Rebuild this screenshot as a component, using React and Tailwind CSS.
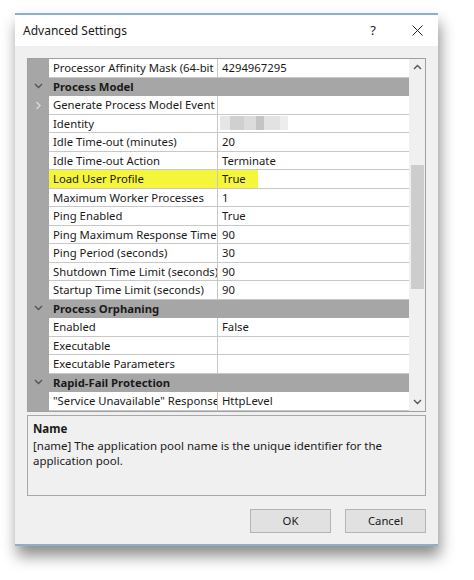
import React from "react";

const rows = [
  { name: "Processor Affinity Mask (64-bit option)", value: "4294967295" },
  { cat: "Process Model" },
  { name: "Generate Process Model Event Log Entry", value: "", arrow: true },
  { name: "Identity", value: "", blur: true },
  { name: "Idle Time-out (minutes)", value: "20" },
  { name: "Idle Time-out Action", value: "Terminate" },
  { name: "Load User Profile", value: "True", mark: true },
  { name: "Maximum Worker Processes", value: "1" },
  { name: "Ping Enabled", value: "True" },
  { name: "Ping Maximum Response Time (seconds)", value: "90" },
  { name: "Ping Period (seconds)", value: "30" },
  { name: "Shutdown Time Limit (seconds)", value: "90" },
  { name: "Startup Time Limit (seconds)", value: "90" },
  { cat: "Process Orphaning" },
  { name: "Enabled", value: "False" },
  { name: "Executable", value: "" },
  { name: "Executable Parameters", value: "" },
  { cat: "Rapid-Fail Protection" },
  { name: "\"Service Unavailable\" Response Type", value: "HttpLevel" },
];

function Chevron({ dir, className }) {
  const d = dir === "down" ? "M1 2 L4.5 5.5 L8 2" : dir === "up" ? "M1 6 L4.5 2.5 L8 6" : "M2.5 1 L6 4.5 L2.5 8";
  return (
    <svg width="9" height="9" viewBox="0 0 9 9" className={className}>
      <path d={d} fill="none" stroke="currentColor" strokeWidth="1.4" />
    </svg>
  );
}

function Row({ r }) {
  if (r.cat) {
    return (
      <div className="flex h-[18.5px] items-center bg-[#a6a6a6]">
        <div className="flex w-[21px] shrink-0 justify-center text-[#555]">
          <Chevron dir="down" />
        </div>
        <div className="pl-[4px] font-bold text-[#1a1a1a]">{r.cat}</div>
      </div>
    );
  }
  return (
    <div className="flex h-[18.5px]">
      <div className="flex w-[21px] shrink-0 items-center justify-center bg-[#a6a6a6] text-[#d8d8d8]">
        {r.arrow && <Chevron dir="right" />}
      </div>
      <div
        className={
          "flex w-[169px] shrink-0 items-center overflow-hidden whitespace-nowrap border-b border-r border-[#c8c8c8] pl-[4px] " +
          (r.mark ? "bg-[#f5f53c]" : "bg-white")
        }
      >
        {r.name}
      </div>
      <div className="flex flex-1 items-center border-b border-[#c8c8c8] bg-white">
        {r.blur ? (
          <div className="flex h-full items-center pl-[2px]">
            <div className="h-[14px] w-[10px] bg-[#e6e6e6]" />
            <div className="h-[14px] w-[14px] bg-[#d0d0d0]" />
            <div className="h-[14px] w-[12px] bg-[#dcdcdc]" />
            <div className="h-[14px] w-[8px] bg-[#c4c4c4]" />
            <div className="h-[14px] w-[16px] bg-[#e2e2e2]" />
            <div className="h-[14px] w-[8px] bg-[#ededed]" />
          </div>
        ) : r.mark ? (
          <span className="flex h-full items-center bg-[#f5f53c] pl-[4px] pr-[12px]">{r.value}</span>
        ) : (
          <span className="pl-[4px]">{r.value}</span>
        )}
      </div>
    </div>
  );
}

export default function App() {
  return (
    <div className="h-[580px] w-[474px] bg-white pl-[15px] pt-[13px] text-[11.3px] leading-none text-[#1a1a1a]" style={{ fontFamily: '"Noto Sans", "Open Sans", sans-serif' }}>
      <div className="w-[423px] border-t-2 border-b-2 border-[#8fb0c4] bg-[#f0f0f0] shadow-[2px_10px_14px_rgba(0,0,0,0.45)]">
        <div className="flex h-[31px] items-center bg-white pl-[8px] pr-[15px]">
          <span className="flex-1 text-[12px]">Advanced Settings</span>
          <span className="mr-[36px] text-[13px]">?</span>
          <svg width="11" height="11" viewBox="0 0 11 11">
            <path d="M0.5 0.5 L10.5 10.5 M10.5 0.5 L0.5 10.5" stroke="#222" strokeWidth="1" />
          </svg>
        </div>
        <div className="px-[12px] pt-[12px]">
          <div className="flex border border-[#a0a0a0] bg-white">
            <div className="flex-1">
              {rows.map((r, i) => (
                <Row key={i} r={r} />
              ))}
            </div>
            <div className="flex w-[16px] flex-col border-l border-[#f0f0f0] bg-[#f0f0f0]">
              <div className="flex h-[17px] items-center justify-center text-[#555]">
                <Chevron dir="up" />
              </div>
              <div className="h-[89px]" />
              <div className="mx-[1px] h-[124px] bg-[#cdcdcd]" />
              <div className="flex-1" />
              <div className="flex h-[17px] items-center justify-center text-[#555]">
                <Chevron dir="down" />
              </div>
            </div>
          </div>
          <div className="mt-[3px] h-[81px] border border-[#a8a8a8] px-[5px] pt-[5px] text-[11.5px] leading-[15px]">
            <div className="font-bold">Name</div>
            <div className="mt-[2px] pr-[20px]">[name] The application pool name is the unique identifier for the application pool.</div>
          </div>
          <div className="flex justify-end gap-[14px] pb-[11px] pt-[13px]">
            <button className="h-[24px] w-[81px] border border-[#b4b4b4] bg-[#e1e1e1]">OK</button>
            <button className="h-[24px] w-[81px] border border-[#b4b4b4] bg-[#e1e1e1]">Cancel</button>
          </div>
        </div>
      </div>
    </div>
  );
}
